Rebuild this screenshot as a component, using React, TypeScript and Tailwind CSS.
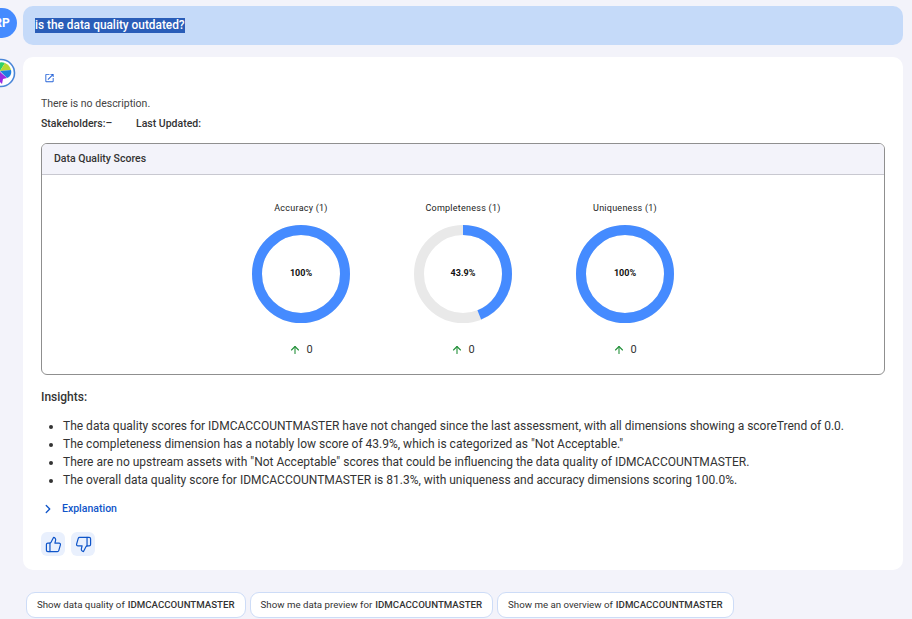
import { ArrowUp, ChevronRight, ThumbsDown, ThumbsUp } from 'lucide-react';
import { MdOpenInNew } from 'react-icons/md';

const scores = [
  { label: 'Accuracy (1)', value: 100, text: '100%' },
  { label: 'Completeness (1)', value: 43.9, text: '43.9%' },
  { label: 'Uniqueness (1)', value: 100, text: '100%' },
];

const insights = [
  'The data quality scores for IDMCACCOUNTMASTER have not changed since the last assessment, with all dimensions showing a scoreTrend of 0.0.',
  'The completeness dimension has a notably low score of 43.9%, which is categorized as "Not Acceptable."',
  'There are no upstream assets with "Not Acceptable" scores that could be influencing the data quality of IDMCACCOUNTMASTER.',
  'The overall data quality score for IDMCACCOUNTMASTER is 81.3%, with uniqueness and accuracy dimensions scoring 100.0%.',
];

const chips = [
  { text: 'Show data quality of', bold: 'IDMCACCOUNTMASTER' },
  { text: 'Show me data preview for', bold: 'IDMCACCOUNTMASTER' },
  { text: 'Show me an overview of', bold: 'IDMCACCOUNTMASTER' },
];

function Donut({ value, text }: { value: number; text: string }) {
  const r = 44;
  const c = 2 * Math.PI * r;
  return (
    <div className="relative h-[98px] w-[98px]">
      <svg width="98" height="98" viewBox="0 0 98 98" className="-rotate-90">
        <circle cx="49" cy="49" r={r} fill="none" stroke="#e9e9e9" strokeWidth="10" />
        <circle cx="49" cy="49" r={r} fill="none" stroke="#458bff" strokeWidth="10" strokeDasharray={`${(c * value) / 100} ${c}`} />
      </svg>
      <div className="absolute inset-0 flex items-center justify-center text-[9px] font-bold text-[#111]">{text}</div>
    </div>
  );
}

function BrainLogo() {
  return (
    <svg width="30" height="30" viewBox="0 0 30 30">
      <circle cx="15" cy="15" r="13.5" fill="#fff" stroke="#4a86d8" strokeWidth="1.6" />
      <path d="M4 14a10 10 0 0 1 6-8l4 7z" fill="#18c8b0" />
      <path d="M10 6a10 10 0 0 1 9-1l-5 8z" fill="#2fd06a" />
      <path d="M19 5a10 10 0 0 1 6 7l-11 1z" fill="#b8d832" />
      <path d="M25 12c1 4-1 7-4 8l-7-7z" fill="#1f7fe0" />
      <path d="M4 14l10-1 1 4-6 3c-3 0-5-2-5-6z" fill="#f032d8" />
      <path d="M14 14l7 6-4 1-1 5-3-3-4-2z" fill="#9a2be2" />
    </svg>
  );
}

export default function App() {
  return (
    <div className="h-[619px] w-[912px] overflow-hidden bg-[#f3f3fa] font-['Roboto',sans-serif] text-[#333]">
      <div className="flex items-start pt-[6px]">
        <div className="ml-[-13px] mr-[6px] mt-[2px] flex h-[30px] w-[30px] shrink-0 items-center justify-center rounded-full bg-[#458bff] text-[12px] font-bold text-white">
          RP
        </div>
        <div className="flex h-[39px] w-[880px] items-center rounded-[10px] bg-[#c5daf9] px-3 text-[11.85px] font-medium">
          <span className="bg-[#2a5db8] leading-[15px] text-white">is the data quality outdated?</span>
        </div>
      </div>

      <div className="mt-[12px] flex items-start">
        <div className="ml-[-14px] mr-[7px] mt-[1px] h-[30px] w-[30px] shrink-0">
          <BrainLogo />
        </div>
        <div className="h-[513px] w-[880px] rounded-[10px] bg-white pl-[18px] pr-[18px] pt-[15px]">
          <MdOpenInNew className="ml-[3px] h-[12px] w-[11px] text-[#2563d8]" />
          <p className="mt-[13px] text-[10.5px] leading-[14px] text-[#444]">There is no description.</p>
          <div className="mt-[6px] flex text-[10.5px] font-medium leading-[14px] text-[#333]">
            <span className="w-[95px]">Stakeholders:–</span>
            <span>Last Updated:</span>
          </div>

          <div className="mt-[12px] h-[232px] w-[844px] overflow-hidden rounded-[6px] border border-[#8f8f8f]">
            <div className="flex h-[31px] items-center border-b border-[#c8c8d0] bg-[#f3f3fa] px-3 text-[10.5px] font-medium text-[#333]">
              Data Quality Scores
            </div>
            <div className="flex justify-center gap-[64px] pt-[27px]">
              {scores.map((s) => (
                <div key={s.label} className="flex w-[98px] flex-col items-center">
                  <div className="whitespace-nowrap text-[9px] leading-[12px] tracking-[0.25px] text-[#222]">{s.label}</div>
                  <div className="mt-[11px]">
                    <Donut value={s.value} text={s.text} />
                  </div>
                  <div className="mt-[20px] flex items-center gap-[5px] text-[11px] leading-[14px] text-[#333]">
                    <ArrowUp className="h-[12px] w-[12px] text-[#23913a]" strokeWidth={2.2} />
                    0
                  </div>
                </div>
              ))}
            </div>
          </div>

          <h3 className="mt-[15px] text-[12px] font-medium leading-[15px] text-[#333]">Insights:</h3>
          <ul className="ml-[22px] mt-[12px] list-disc text-[12px] leading-[18px] text-[#333]">
            {insights.map((t) => (
              <li key={t} className="whitespace-nowrap">{t}</li>
            ))}
          </ul>

          <div className="mt-[13px] flex items-center text-[10.5px] font-medium leading-[14px] text-[#0f55c9]">
            <ChevronRight className="mr-[7px] h-[14px] w-[14px]" strokeWidth={2.2} />
            Explanation
          </div>

          <div className="mt-[16px] flex gap-[6px]">
            <button className="flex h-[24px] w-[24px] items-center justify-center rounded-[6px] bg-[#e9f0fd] text-[#0f55c9]">
              <ThumbsUp className="h-[17px] w-[17px]" strokeWidth={1.7} />
            </button>
            <button className="flex h-[24px] w-[24px] items-center justify-center rounded-[6px] bg-[#e9f0fd] text-[#0f55c9]">
              <ThumbsDown className="h-[17px] w-[17px]" strokeWidth={1.7} />
            </button>
          </div>
        </div>
      </div>

      <div className="ml-[26px] mt-[22px] flex gap-[4px]">
        {chips.map((c) => (
          <div key={c.text} className="flex h-[26px] items-center gap-[3px] whitespace-nowrap rounded-[9px] border border-[#cddcf7] bg-white px-[10px] text-[9.7px] text-[#333]">
            <span>{c.text}</span>
            <span className="font-medium">{c.bold}</span>
          </div>
        ))}
      </div>
    </div>
  );
}
